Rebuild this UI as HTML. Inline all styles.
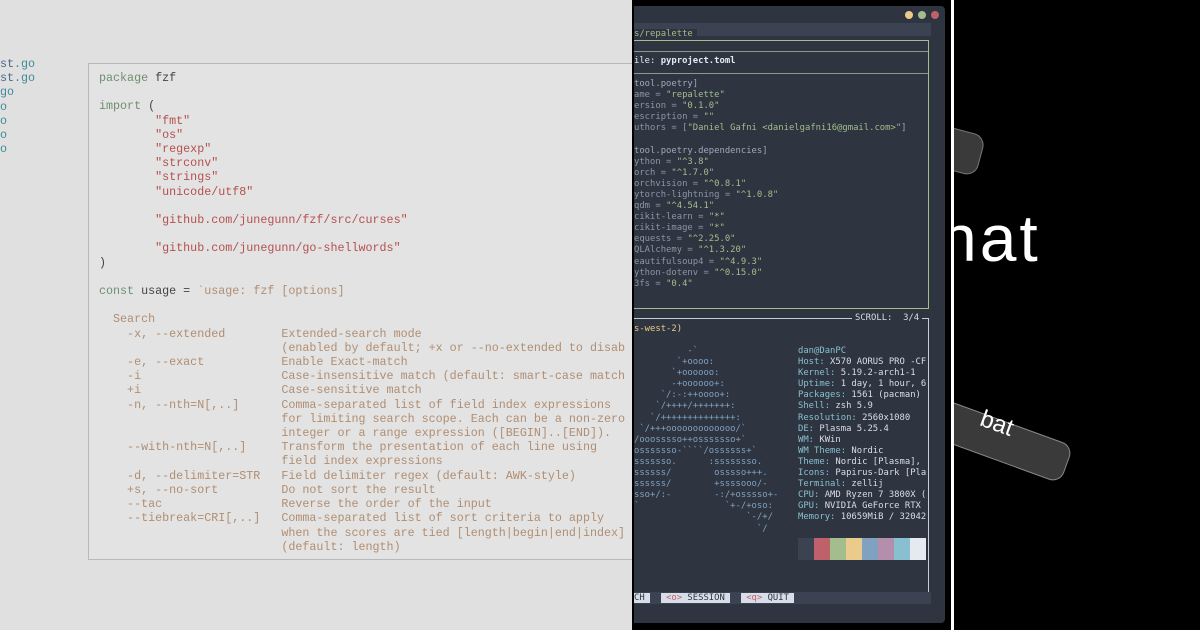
<!DOCTYPE html>
<html><head><meta charset="utf-8"><style>
*{margin:0;padding:0;box-sizing:border-box}
body{width:1200px;height:630px;overflow:hidden;background:#000;position:relative;font-family:"Liberation Mono",monospace}
#left{position:absolute;left:0;top:0;width:632px;height:630px;background:#e0e0e0;overflow:hidden}
#files{position:absolute;left:0;top:57px;font-size:11.7px;line-height:14.2px;color:#4a6a8a;white-space:pre}
#files .g{color:#3f8a9a}
#code{position:absolute;left:88px;top:63px;width:600px;height:497px;border:1px solid #b8b8b8;background:#e3e3e3}
#code pre{position:absolute;left:10px;top:7px;font-family:"Liberation Mono",monospace;font-size:11.7px;line-height:14.2px;color:#b08e72}
.k{color:#6f8f6f}.s{color:#b5504f}.d{color:#444}
#term{position:absolute;left:634px;top:6px;width:311px;height:617px;background:#2e3440;overflow:hidden;border-radius:0 4px 4px 0}
.t{position:absolute;font-family:"DejaVu Sans Mono","Liberation Mono",monospace;font-size:8.9px;line-height:11.1px;white-space:pre;color:#d8dee9}
.dot{position:absolute;width:8px;height:8px;border-radius:50%;top:5px}
#right{position:absolute;left:951px;top:0;width:249px;height:630px;background:#000;overflow:hidden;border-left:3px solid #fff}
.sans{font-family:"Liberation Sans","DejaVu Sans",sans-serif}
</style></head><body>
<div id="left">
<div id="files">st<span class="g">.go</span>
st<span class="g">.go</span>
<span class="g">go</span>
<span class="g">o</span>
<span class="g">o</span>
<span class="g">o</span>
<span class="g">o</span></div>
<div id="code"><pre><span class="k">package</span> <span class="d">fzf</span>

<span class="k">import</span> <span class="d">(</span>
        <span class="s">"fmt"</span>
        <span class="s">"os"</span>
        <span class="s">"regexp"</span>
        <span class="s">"strconv"</span>
        <span class="s">"strings"</span>
        <span class="s">"unicode/utf8"</span>

        <span class="s">"github.com/junegunn/fzf/src/curses"</span>

        <span class="s">"github.com/junegunn/go-shellwords"</span>
<span class="d">)</span>

<span class="k">const</span> <span class="d">usage =</span> &#96;usage: fzf [options]

  Search
    -x, --extended        Extended-search mode
                          (enabled by default; +x or --no-extended to disab
    -e, --exact           Enable Exact-match
    -i                    Case-insensitive match (default: smart-case match
    +i                    Case-sensitive match
    -n, --nth=N[,..]      Comma-separated list of field index expressions
                          for limiting search scope. Each can be a non-zero
                          integer or a range expression ([BEGIN]..[END]).
    --with-nth=N[,..]     Transform the presentation of each line using
                          field index expressions
    -d, --delimiter=STR   Field delimiter regex (default: AWK-style)
    +s, --no-sort         Do not sort the result
    --tac                 Reverse the order of the input
    --tiebreak=CRI[,..]   Comma-separated list of sort criteria to apply
                          when the scores are tied [length|begin|end|index]
                          (default: length)</pre></div>
</div>
<div id="term">
<div class="dot" style="left:271px;background:#ebcb8b"></div>
<div class="dot" style="left:284px;background:#a3be8c"></div>
<div class="dot" style="left:297px;background:#bf616a"></div>
<div style="position:absolute;left:0;top:17px;width:297px;height:13px;background:#3b4252"></div>
<div style="position:absolute;left:-5px;top:34px;width:300px;height:269px;border:1px solid #a3be8c"></div>
<div style="position:absolute;left:0;top:45px;width:294px;height:1px;background:#8a9a8a"></div>
<div style="position:absolute;left:0;top:67px;width:294px;height:1px;background:#8a9a8a"></div>
<div class="t" style="left:0;top:23px;background:#2e3440;color:#a3be8c;padding-right:4px">s/repalette</div>
<div class="t" style="left:0;top:50px;color:#e5e9f0">ile: <b>pyproject.toml</b></div>
<div class="t" style="left:0;top:73px;color:#a0aab8">tool.poetry]
<span style="color:#8a96a8">ame = </span><span style="color:#a3be8c">"repalette"</span>
<span style="color:#8a96a8">ersion = </span><span style="color:#a3be8c">"0.1.0"</span>
<span style="color:#8a96a8">escription = </span><span style="color:#a3be8c">""</span>
<span style="color:#8a96a8">uthors = [</span><span style="color:#a3be8c">"Daniel Gafni &lt;danielgafni16@gmail.com&gt;"</span>]

tool.poetry.dependencies]
<span style="color:#8a96a8">ython = </span><span style="color:#a3be8c">"^3.8"</span>
<span style="color:#8a96a8">orch = </span><span style="color:#a3be8c">"^1.7.0"</span>
<span style="color:#8a96a8">orchvision = </span><span style="color:#a3be8c">"^0.8.1"</span>
<span style="color:#8a96a8">ytorch-lightning = </span><span style="color:#a3be8c">"^1.0.8"</span>
<span style="color:#8a96a8">qdm = </span><span style="color:#a3be8c">"^4.54.1"</span>
<span style="color:#8a96a8">cikit-learn = </span><span style="color:#a3be8c">"*"</span>
<span style="color:#8a96a8">cikit-image = </span><span style="color:#a3be8c">"*"</span>
<span style="color:#8a96a8">equests = </span><span style="color:#a3be8c">"^2.25.0"</span>
<span style="color:#8a96a8">QLAlchemy = </span><span style="color:#a3be8c">"^1.3.20"</span>
<span style="color:#8a96a8">eautifulsoup4 = </span><span style="color:#a3be8c">"^4.9.3"</span>
<span style="color:#8a96a8">ython-dotenv = </span><span style="color:#a3be8c">"^0.15.0"</span>
<span style="color:#8a96a8">3fs = </span><span style="color:#a3be8c">"0.4"</span></div>
<div style="position:absolute;left:-5px;top:312px;width:300px;height:286px;border:1px solid #c8ccd4"></div>
<div class="t" style="left:218px;top:307px;background:#2e3440;padding:0 3px">SCROLL:  3/4</div>
<div class="t" style="left:0;top:318px;color:#ebcb8b">s-west-2)</div>
<div class="t" style="left:0;top:340px;color:#81a1c1">          -&#96;
        &#96;+oooo:
       &#96;+oooooo:
       -+oooooo+:
     &#96;/:-:++oooo+:
    &#96;/++++/+++++++:
   &#96;/++++++++++++++:
 &#96;/+++ooooooooooooo/&#96;
/ooosssso++osssssso+&#96;
osssssso-&#96;&#96;&#96;&#96;/ossssss+&#96;
sssssso.      :ssssssso.
ssssss/        osssso+++.
ssssss/        +ssssooo/-
sso+/:-        -:/+osssso+-
&#96;                &#96;+-/+oso:
                     &#96;-/+/
                       &#96;/</div>
<div class="t" style="left:164px;top:340px;color:#d8dee9"><span style="color:#88c0d0">dan@DanPC</span>
<span style="color:#88c0d0">Host:</span> X570 AORUS PRO -CF
<span style="color:#88c0d0">Kernel:</span> 5.19.2-arch1-1
<span style="color:#88c0d0">Uptime:</span> 1 day, 1 hour, 6
<span style="color:#88c0d0">Packages:</span> 1561 (pacman)
<span style="color:#88c0d0">Shell:</span> zsh 5.9
<span style="color:#88c0d0">Resolution:</span> 2560x1080
<span style="color:#88c0d0">DE:</span> Plasma 5.25.4
<span style="color:#88c0d0">WM:</span> KWin
<span style="color:#88c0d0">WM Theme:</span> Nordic
<span style="color:#88c0d0">Theme:</span> Nordic [Plasma],
<span style="color:#88c0d0">Icons:</span> Papirus-Dark [Pla
<span style="color:#88c0d0">Terminal:</span> zellij
<span style="color:#88c0d0">CPU:</span> AMD Ryzen 7 3800X (
<span style="color:#88c0d0">GPU:</span> NVIDIA GeForce RTX
<span style="color:#88c0d0">Memory:</span> 10659MiB / 32042</div>
<div style="position:absolute;left:164px;top:532px;height:22px;width:128px;display:flex">
<div style="flex:1;background:#3b4252"></div><div style="flex:1;background:#bf616a"></div><div style="flex:1;background:#a3be8c"></div><div style="flex:1;background:#ebcb8b"></div><div style="flex:1;background:#81a1c1"></div><div style="flex:1;background:#b48ead"></div><div style="flex:1;background:#88c0d0"></div><div style="flex:1;background:#e5e9f0"></div></div>
<div style="position:absolute;left:0;top:586px;width:297px;height:12px;background:#3b4252"></div>
<div class="t" style="left:0;top:587px;color:#2e3440"><span style="background:#d8dee9">CH </span>  <span style="background:#d8dee9"> <span style="color:#bf616a">&lt;o&gt;</span> SESSION </span>  <span style="background:#d8dee9"> <span style="color:#bf616a">&lt;q&gt;</span> QUIT </span></div>
</div>
<div id="right">
<div style="position:absolute;left:-40px;top:127px;width:68px;height:42px;border-radius:12px;background:#3a3a3a;border:1px solid #777;transform:rotate(15deg)"></div>
<div class="sans" style="position:absolute;left:-14px;top:200px;font-size:66px;color:#fff;letter-spacing:3px">hat</div>
<div style="position:absolute;left:-40px;top:388px;width:170px;height:40px;border-radius:12px;background:#3a3a3a;border:1px solid #888;transform:rotate(20deg);transform-origin:0 0"></div>
<div class="sans" style="position:absolute;left:26px;top:410px;font-size:24px;color:#fff;transform:rotate(20deg)">bat</div>
</div>
</body></html>
